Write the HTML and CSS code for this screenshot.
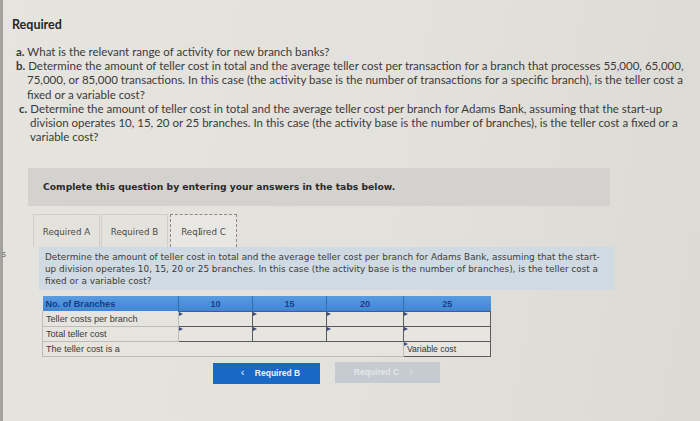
FILE: index.html
```html
<!DOCTYPE html>
<html>
<head>
<meta charset="utf-8">
<link rel="stylesheet" href="styles.css">
</head>
<body>
<div class="page">
  <div class="edge-text">s</div>
  <h1 class="title">Required</h1>
  <ul class="reqs">
    <li class="req req-a"><span class="lbl">a.</span> What is the relevant range of activity for new branch banks?</li>
    <li class="req req-b"><span class="lbl">b.</span> Determine the amount of teller cost in total and the average teller cost per transaction for a branch that processes 55,000, 65,000,<br>75,000, or 85,000 transactions. In this case (the activity base is the number of transactions for a specific branch), is the teller cost a<br>fixed or a variable cost?</li>
    <li class="req req-c"><span class="lbl">c.</span> Determine the amount of teller cost in total and the average teller cost per branch for Adams Bank, assuming that the start-up<br>division operates 10, 15, 20 or 25 branches. In this case (the activity base is the number of branches), is the teller cost a fixed or a<br>variable cost?</li>
  </ul>

  <div class="complete">Complete this question by entering your answers in the tabs below.</div>

  <div class="tabs">
    <div class="tab">Required A</div>
    <div class="tab">Required B</div>
    <div class="tab active">Req<span class="cursor">I</span>ired C</div>
  </div>

  <div class="instr">Determine the amount of teller cost in total and the average teller cost per branch for Adams Bank, assuming that the start-<br>up division operates 10, 15, 20 or 25 branches. In this case (the activity base is the number of branches), is the teller cost a<br>fixed or a variable cost?</div>

  <table class="grid">
    <tr class="head">
      <th class="lab">No. of Branches</th>
      <th>10</th>
      <th>15</th>
      <th>20</th>
      <th>25</th>
    </tr>
    <tr>
      <td class="lab">Teller costs per branch</td>
      <td class="inp"></td>
      <td class="inp"></td>
      <td class="inp"></td>
      <td class="inp"></td>
    </tr>
    <tr>
      <td class="lab">Total teller cost</td>
      <td class="inp"></td>
      <td class="inp"></td>
      <td class="inp"></td>
      <td class="inp"></td>
    </tr>
    <tr>
      <td class="lab last" colspan="4">The teller cost is a</td>
      <td class="inp sel">Variable cost</td>
    </tr>
  </table>

  <div class="nav">
    <div class="btn prev"><span class="chev">&lsaquo;</span> Required B</div>
    <div class="btn next">Required C <span class="chev">&rsaquo;</span></div>
  </div>
</div>
</body>
</html>
```
FILE: styles.css
```css
html, body {
  margin: 0;
  padding: 0;
}
body {
  width: 700px;
  height: 421px;
  overflow: hidden;
  background: linear-gradient(100deg, #e6e4df 0%, #e3e1db 55%, #dcdad4 100%);
  font-family: Lato, "Open Sans", sans-serif;
  color: #333;
}
.page {
  position: relative;
  height: 421px;
  box-sizing: border-box;
  padding: 17px 0 0 9px;
  border-left: 3px solid #a3a29e;
}
.edge-text {
  position: absolute;
  left: -1px;
  top: 250px;
  font-family: "DejaVu Sans", sans-serif;
  font-size: 8px;
  color: #666;
}
.title {
  margin: 0;
  font-size: 12.5px;
  font-weight: 700;
  color: #262626;
  line-height: 16px;
}
.reqs {
  list-style: none;
  margin: 12px 0 0 0;
  padding: 0;
  font-size: 11.5px;
  line-height: 14.2px;
  color: #3a3a3a;
  white-space: nowrap;
}
.req {
  padding-left: 12px;
  text-indent: -11px;
}
.req-a, .req-b {
  margin-left: 3px;
}
.req-c {
  margin-left: 5px;
  padding-left: 13px;
}
.lbl {
  font-weight: 700;
}
.complete {
  margin: 24px 0 0 16px;
  width: 582px;
  height: 38px;
  box-sizing: border-box;
  padding: 13px 15px 0;
  background: #d3d2ce;
  font-family: "DejaVu Sans", sans-serif;
  font-weight: 700;
  font-size: 9.2px;
  color: #2a2a2a;
}
.tabs {
  display: flex;
  margin: 8px 0 0 21px;
  height: 33px;
}
.tab {
  width: 67px;
  box-sizing: border-box;
  border: 1px solid #cfcdc8;
  border-bottom: none;
  margin-right: 1px;
  padding-top: 12px;
  text-align: center;
  font-family: "DejaVu Sans", sans-serif;
  font-size: 8.7px;
  color: #4a4a4a;
  background: #e3e2dd;
}
.tab.active {
  border: 1px dashed #8a8a88;
  border-bottom: none;
  background: #e8e7e3;
  margin-left: 1px;
}
.cursor {
  font-family: "DejaVu Serif", serif;
  font-size: 9px;
  color: #444;
  letter-spacing: -1px;
}
.instr {
  margin: 0 0 0 27px;
  width: 575px;
  height: 43px;
  box-sizing: border-box;
  padding: 5px 0 0 6px;
  background: #cfdae2;
  font-family: "DejaVu Sans", sans-serif;
  font-size: 8.9px;
  line-height: 11.6px;
  color: #3c3c3c;
  white-space: nowrap;
}
.grid {
  margin: 6px 0 0 30px;
  border-collapse: collapse;
  font-family: "Liberation Sans", Arial, sans-serif;
  font-size: 9.1px;
}
.grid th, .grid td {
  height: 15px;
  padding: 0 3px;
  box-sizing: border-box;
}
.head th {
  background: linear-gradient(#5b9be0, #3f86d6);
  color: #1c3f86;
  font-weight: 700;
  text-align: center;
  border-left: 1px solid #2f6fb8;
  height: 15px;
}
.head th.lab {
  text-align: left;
  border-left: none;
  width: 136px;
  color: #173a80;
}
.head th:nth-child(2) { width: 74px; }
.head th:nth-child(3) { width: 74px; }
.head th:nth-child(4) { width: 77px; }
.head th:nth-child(5) { width: 87px; }
.grid td {
  background: #e5e4df;
  color: #3a3a3a;
}
.grid td.lab {
  border: 1px solid #bdbcb8;
  border-top: none;
}
.grid td.inp {
  position: relative;
  border: 1.5px solid #5a5a5e;
  background: #e6e5e0;
}
.grid td.inp::before {
  content: "";
  position: absolute;
  left: 0;
  top: 0;
  border-left: 4px solid #3b4c80;
  border-top: 2px solid transparent;
  border-bottom: 2px solid transparent;
}
.grid td.sel {
  padding-left: 3px;
  font-size: 8.6px;
  color: #333;
}
.nav {
  display: flex;
  margin: 6px 0 0 201px;
  gap: 15px;
}
.btn {
  width: 107px;
  height: 21px;
  box-sizing: border-box;
  padding-top: 5px;
  text-align: center;
  font-family: "Liberation Sans", Arial, sans-serif;
  font-weight: 700;
  font-size: 8.5px;
}
.btn.prev {
  background: #1a68c6;
  color: #eef3fb;
}
.btn.next {
  background: #c6cbd1;
  color: #e2e6ea;
  width: 105px;
  margin-top: -1px;
}
.chev {
  font-size: 11px;
  font-weight: 400;
  margin: 0 8px;
  line-height: 8px;
}
```
